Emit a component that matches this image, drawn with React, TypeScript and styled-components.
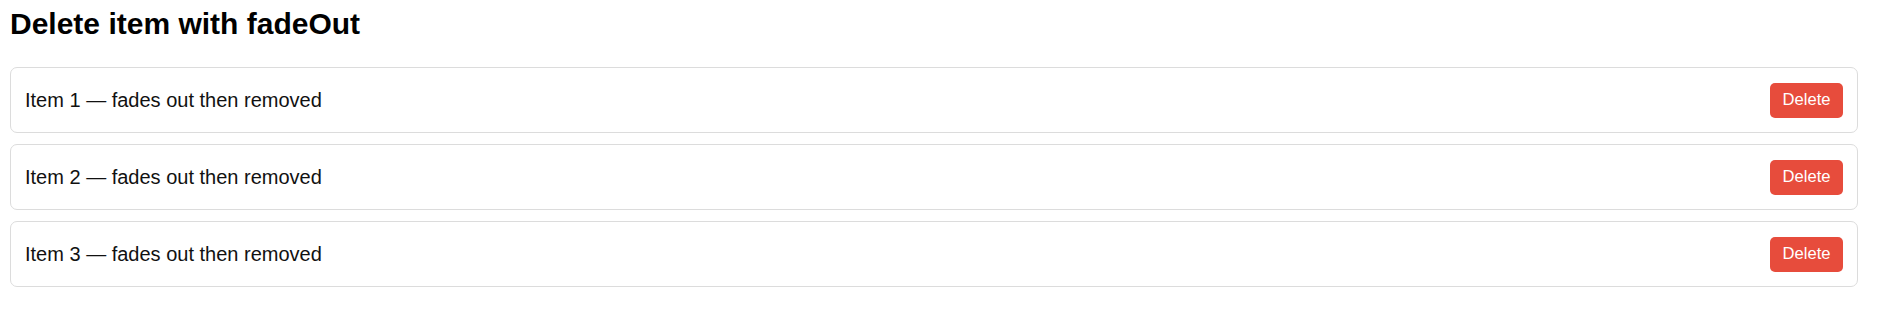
import React, { useState } from "react";
import styled, { createGlobalStyle, keyframes, css } from "styled-components";

const GlobalStyle = createGlobalStyle`
  body {
    margin: 0;
    background: #fff;
    font-family: "Liberation Sans", Arial, sans-serif;
    color: #111;
  }
`;

const fadeOut = keyframes`
  from { opacity: 1; }
  to { opacity: 0; }
`;

const Page = styled.div`
  padding: 7px 24px 0 10px;
`;

const Title = styled.h2`
  margin: 0 0 26px;
  font-size: 30px;
  font-weight: 700;
  line-height: normal;
  color: #000;
`;

const List = styled.div`
  display: flex;
  flex-direction: column;
  gap: 11px;
`;

const Card = styled.div<{ $leaving: boolean }>`
  display: flex;
  align-items: center;
  justify-content: space-between;
  padding: 14.5px 14px;
  border: 1px solid #dcdcdc;
  border-radius: 7px;
  background: #fff;
  font-size: 20px;
  color: #111;
  ${({ $leaving }) =>
    $leaving &&
    css`
      animation: ${fadeOut} 0.4s ease forwards;
    `}
`;

const DeleteBtn = styled.button`
  height: 35px;
  padding: 0 12.5px;
  border: none;
  border-radius: 5px;
  background: #e74c3c;
  color: #fff;
  font-family: "Liberation Sans", Arial, sans-serif;
  font-size: 16.6px;
  cursor: pointer;
`;

type Item = { id: number; leaving: boolean };

export default function App() {
  const [items, setItems] = useState<Item[]>([
    { id: 1, leaving: false },
    { id: 2, leaving: false },
    { id: 3, leaving: false },
  ]);

  const remove = (id: number) => {
    setItems((prev) => prev.map((it) => (it.id === id ? { ...it, leaving: true } : it)));
  };

  const drop = (id: number) => {
    setItems((prev) => prev.filter((it) => it.id !== id));
  };

  return (
    <Page>
      <GlobalStyle />
      <Title>Delete item with fadeOut</Title>
      <List>
        {items.map((it) => (
          <Card
            key={it.id}
            $leaving={it.leaving}
            onAnimationEnd={() => it.leaving && drop(it.id)}
          >
            <span>Item {it.id} — fades out then removed</span>
            <DeleteBtn onClick={() => remove(it.id)}>Delete</DeleteBtn>
          </Card>
        ))}
      </List>
    </Page>
  );
}
